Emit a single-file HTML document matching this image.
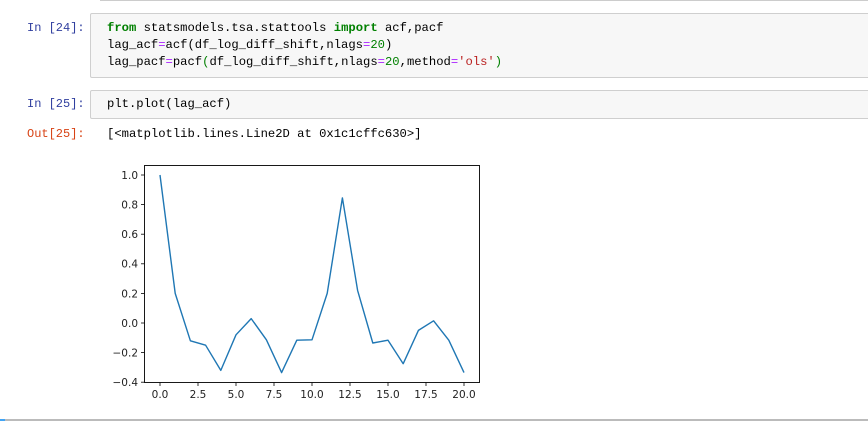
<!DOCTYPE html>
<html><head><style>
body{margin:0;width:868px;height:421px;background:#fff;position:relative;overflow:hidden;font-family:"Liberation Mono",monospace;}
.p{position:absolute;font-size:12.2px;line-height:17px;white-space:pre;}
.in{color:#303f9f;font-size:12px}.out{color:#d84315;font-size:12px}
.box{position:absolute;left:90px;right:-2px;background:#f7f7f7;border:1px solid #cfcfcf;border-radius:2px;}
.k{color:#008000;font-weight:bold}.o{color:#aa22ff}.n{color:#008000}.s{color:#ba2121}
</style></head><body>
<div style="position:absolute;left:100px;right:0;top:0;height:1px;background:#ccc"></div>
<div class="box" style="top:13px;height:63px"></div>
<div class="p in" style="left:27px;top:20px">In [24]:</div>
<div class="p" style="left:107px;top:20px"><span class="k">from</span> statsmodels.tsa.stattools <span class="k">import</span> acf,pacf
lag_acf<span class="o">=</span>acf(df_log_diff_shift,nlags<span class="o">=</span><span class="n">20</span>)
lag_pacf<span class="o">=</span>pacf<span class="n">(</span>df_log_diff_shift,nlags<span class="o">=</span><span class="n">20</span>,method<span class="o">=</span><span class="s">'ols'</span><span class="n">)</span></div>
<div class="box" style="top:90px;height:27px"></div>
<div class="p in" style="left:27px;top:96px">In [25]:</div>
<div class="p" style="left:107px;top:96px">plt.plot(lag_acf)</div>
<div class="p out" style="left:27px;top:126px">Out[25]:</div>
<div class="p" style="left:107px;top:126px">[&lt;matplotlib.lines.Line2D at 0x1c1cffc630&gt;]</div>
<svg width="868" height="421" style="position:absolute;left:0;top:0" font-family="DejaVu Sans, sans-serif" font-size="10.5" fill="#222">
<rect x="144.5" y="165.5" width="335" height="217" fill="none" stroke="#000" stroke-width="0.9"/>
<g stroke="#000" stroke-width="0.8">
<line x1="141" x2="144.5" y1="175" y2="175"/><line x1="141" x2="144.5" y1="204.6" y2="204.6"/><line x1="141" x2="144.5" y1="234.2" y2="234.2"/><line x1="141" x2="144.5" y1="263.8" y2="263.8"/><line x1="141" x2="144.5" y1="293.4" y2="293.4"/><line x1="141" x2="144.5" y1="323" y2="323"/><line x1="141" x2="144.5" y1="352.6" y2="352.6"/><line x1="141" x2="144.5" y1="382.2" y2="382.2"/>
<line x1="160" x2="160" y1="382.5" y2="386"/><line x1="198" x2="198" y1="382.5" y2="386"/><line x1="236" x2="236" y1="382.5" y2="386"/><line x1="274" x2="274" y1="382.5" y2="386"/><line x1="312" x2="312" y1="382.5" y2="386"/><line x1="350" x2="350" y1="382.5" y2="386"/><line x1="388" x2="388" y1="382.5" y2="386"/><line x1="426" x2="426" y1="382.5" y2="386"/><line x1="464" x2="464" y1="382.5" y2="386"/>
</g>
<g text-anchor="end">
<text x="138" y="179">1.0</text><text x="138" y="208.5">0.8</text><text x="138" y="238">0.6</text><text x="138" y="267.5">0.4</text><text x="138" y="297.5">0.2</text><text x="138" y="327">0.0</text><text x="138" y="356.5">−0.2</text><text x="138" y="386">−0.4</text>
</g>
<g text-anchor="middle">
<text x="160" y="398">0.0</text><text x="198" y="398">2.5</text><text x="236" y="398">5.0</text><text x="274" y="398">7.5</text><text x="312" y="398">10.0</text><text x="350" y="398">12.5</text><text x="388" y="398">15.0</text><text x="426" y="398">17.5</text><text x="464" y="398">20.0</text>
</g>
<polyline fill="none" stroke="#1f77b4" stroke-width="1.4" stroke-linejoin="round" points="160,175 175.2,293.4 190.4,340.8 205.6,345.2 220.8,370.4 236,334.8 251.2,318.6 266.4,339.8 281.6,372.6 296.8,340.2 312,339.8 327.2,293.4 342.4,197.9 357.6,290.4 372.8,343 388,340.2 403.2,363.7 418.4,330.4 433.6,320.8 448.8,340.2 464,372.6"/>
</svg>
<div style="position:absolute;left:0;right:0;top:419px;height:2px;background:#bbb"></div>
<div style="position:absolute;left:0;width:5px;top:419px;height:2px;background:#42a5f5"></div>
</body></html>
